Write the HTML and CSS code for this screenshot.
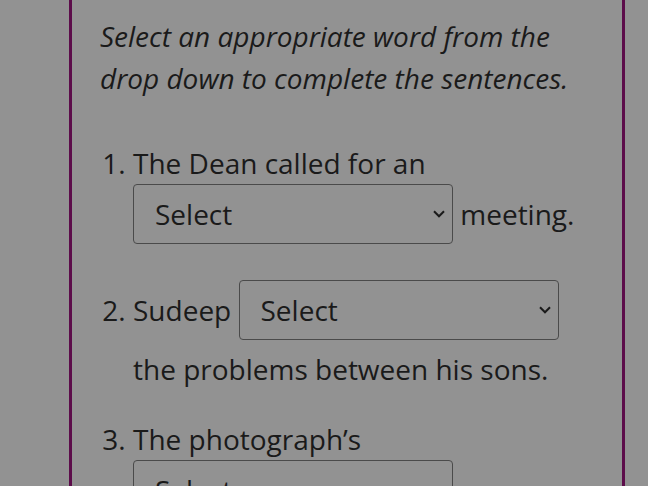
FILE: index.html
```html
<!DOCTYPE html>
<html lang="en">
<head>
<meta charset="utf-8">
<title>Fill in the blanks</title>
<link rel="stylesheet" href="styles.css">
</head>
<body>
<main class="card">
  <p class="instruction">Select an appropriate word from the drop down to complete the sentences.</p>
  <ol class="questions">
    <li class="question">The Dean called for an <span class="blank-wrap"><select class="blank"><option>Select</option><option>urgent</option><option>urgently</option></select><svg class="chevron" viewBox="0 0 12 8" width="12" height="8" aria-hidden="true"><path d="M1 1.3 L6 6.3 L11 1.3" fill="none" stroke="#1a1a1a" stroke-width="2"/></svg></span> meeting.</li>
    <li class="question">Sudeep <span class="blank-wrap"><select class="blank"><option>Select</option><option>resolved</option><option>resolution</option></select><svg class="chevron" viewBox="0 0 12 8" width="12" height="8" aria-hidden="true"><path d="M1 1.3 L6 6.3 L11 1.3" fill="none" stroke="#1a1a1a" stroke-width="2"/></svg></span> the problems between his sons.</li>
    <li class="question">The photograph’s <span class="blank-wrap"><select class="blank"><option>Select</option><option>beauty</option><option>beautiful</option></select><svg class="chevron" viewBox="0 0 12 8" width="12" height="8" aria-hidden="true"><path d="M1 1.3 L6 6.3 L11 1.3" fill="none" stroke="#1a1a1a" stroke-width="2"/></svg></span></li>
  </ol>
</main>
</body>
</html>
```

FILE: styles.css
```css
html, body {
  margin: 0;
  padding: 0;
  height: 100%;
  overflow: hidden;
  background: #929292;
}

body {
  font-family: "Open Sans", "Liberation Sans", sans-serif;
  font-size: 28px;
  line-height: 1.5;
  color: #1a1a1a;
}

.card {
  box-sizing: border-box;
  width: 556px;
  min-height: 100%;
  margin-left: 69px;
  padding: 15px 28px 40px 28px;
  border-left: 3px solid #5c0c4a;
  border-right: 3px solid #5c0c4a;
}

.instruction {
  margin: 0;
  font-style: italic;
}

.questions {
  margin: 43px 0 0 0;
  padding-left: 33px;
}

.question {
  margin-bottom: 28px;
}

.blank-wrap {
  position: relative;
  display: inline-block;
  margin-bottom: 8px;
}

.blank {
  -webkit-appearance: none;
  appearance: none;
  box-sizing: border-box;
  display: inline-block;
  width: 320px;
  height: 60px;
  margin: 0;
  padding: 0 30px 0 21px;
  font-family: inherit;
  font-size: 28px;
  color: #1a1a1a;
  background-color: transparent;
  border: 1px solid #4a4a4a;
  border-radius: 4px;
  vertical-align: baseline;
}

.chevron {
  position: absolute;
  right: 8px;
  top: 26px;
  pointer-events: none;
}
```
